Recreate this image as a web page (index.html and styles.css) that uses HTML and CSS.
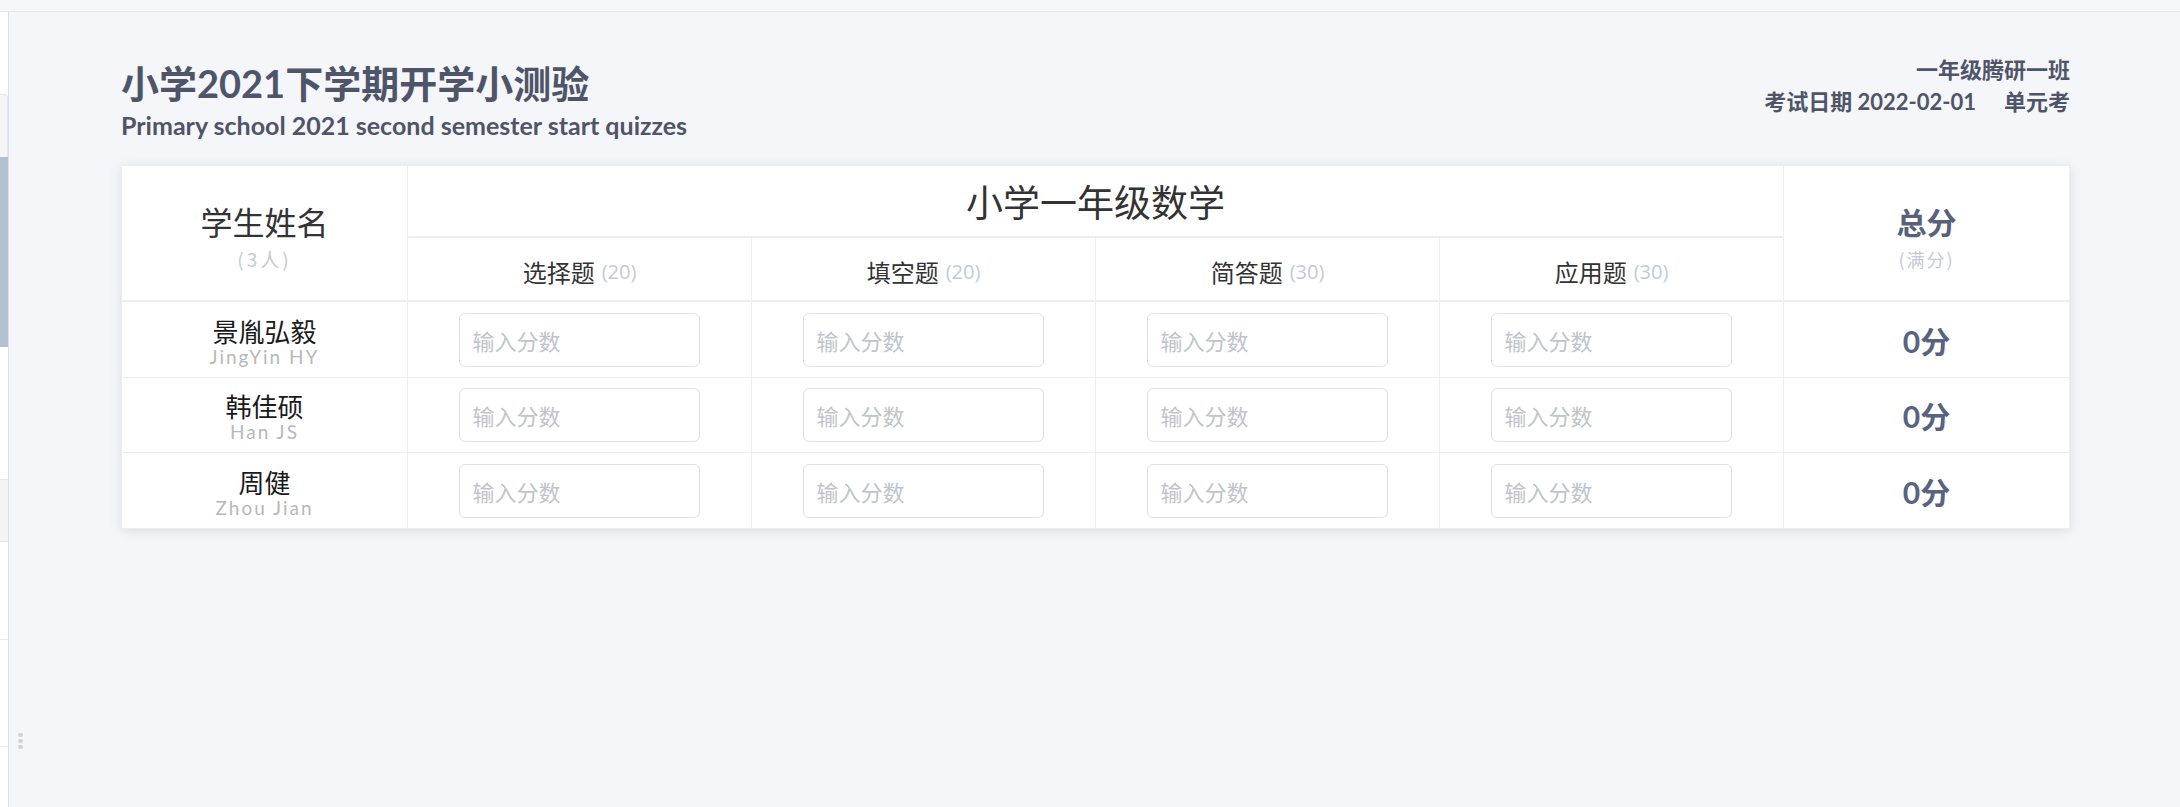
FILE: index.html
```html
<!DOCTYPE html>
<html lang="zh-CN">
<head>
<meta charset="utf-8">
<title>小学2021下学期开学小测验</title>
<link rel="stylesheet" href="styles.css">
</head>
<body>
<div class="topbar"></div>
<div class="layout">
  <aside class="rail">
    <div class="rail-tab"></div>
    <div class="rail-active"></div>
    <div class="rail-space"></div>
    <div class="rail-box"></div>
    <div class="rail-line rail-line-1"></div>
    <div class="rail-line rail-line-2"></div>
  </aside>
  <main class="main">
    <header class="head">
      <div class="head-left">
        <h1 class="title">小学2021下学期开学小测验</h1>
        <p class="subtitle">Primary school 2021 second semester start quizzes</p>
      </div>
      <div class="head-right">
        <div class="info-line">一年级腾研一班</div>
        <div class="info-line">考试日期 2022-02-01<span class="info-gap"></span>单元考</div>
      </div>
    </header>

    <section class="card">
      <div class="grid">
        <div class="cell name-head">
          <div class="big-label">学生姓名</div>
          <div class="muted-label">(3人)</div>
        </div>
        <div class="cell subject-head">小学一年级数学</div>
        <div class="cell total-head">
          <div class="total-label">总分</div>
          <div class="muted-label muted-small">(满分)</div>
        </div>

        <div class="cell q-head">选择题<span class="q-max">(20)</span></div>
        <div class="cell q-head">填空题<span class="q-max">(20)</span></div>
        <div class="cell q-head">简答题<span class="q-max">(30)</span></div>
        <div class="cell q-head">应用题<span class="q-max">(30)</span></div>

        <div class="cell name-cell">
          <div class="student">景胤弘毅</div>
          <div class="pinyin">JingYin HY</div>
        </div>
        <div class="cell input-cell"><input class="score-input" type="text" placeholder="输入分数"></div>
        <div class="cell input-cell"><input class="score-input" type="text" placeholder="输入分数"></div>
        <div class="cell input-cell"><input class="score-input" type="text" placeholder="输入分数"></div>
        <div class="cell input-cell"><input class="score-input" type="text" placeholder="输入分数"></div>
        <div class="cell total-cell">0分</div>

        <div class="cell name-cell">
          <div class="student">韩佳硕</div>
          <div class="pinyin">Han JS</div>
        </div>
        <div class="cell input-cell"><input class="score-input" type="text" placeholder="输入分数"></div>
        <div class="cell input-cell"><input class="score-input" type="text" placeholder="输入分数"></div>
        <div class="cell input-cell"><input class="score-input" type="text" placeholder="输入分数"></div>
        <div class="cell input-cell"><input class="score-input" type="text" placeholder="输入分数"></div>
        <div class="cell total-cell">0分</div>

        <div class="cell name-cell last-row">
          <div class="student">周健</div>
          <div class="pinyin">Zhou Jian</div>
        </div>
        <div class="cell input-cell last-row"><input class="score-input" type="text" placeholder="输入分数"></div>
        <div class="cell input-cell last-row"><input class="score-input" type="text" placeholder="输入分数"></div>
        <div class="cell input-cell last-row"><input class="score-input" type="text" placeholder="输入分数"></div>
        <div class="cell input-cell last-row"><input class="score-input" type="text" placeholder="输入分数"></div>
        <div class="cell total-cell last-row">0分</div>
      </div>
    </section>

    <div class="handle"><i></i><i></i><i></i></div>
  </main>
</div>
</body>
</html>
```

FILE: styles.css
```css
* { box-sizing: border-box; }

html, body {
  margin: 0;
  padding: 0;
  height: 100%;
}

body {
  font-family: "Noto Sans CJK SC", "Noto Sans", sans-serif;
  background: #f5f6fa;
  color: #333;
  overflow: hidden;
}

.topbar {
  height: 12px;
  background: #f6f7fa;
  border-bottom: 1px solid #e4e6eb;
}

.layout {
  display: flex;
  height: 795px;
}

/* collapsed side rail */
.rail {
  width: 9px;
  flex: none;
  background: #fff;
  border-right: 1px solid #dcdfe6;
  display: flex;
  flex-direction: column;
}
.rail-tab {
  margin-top: 82px;
  height: 63px;
  background: #f5f5f6;
  border-top: 1px solid #e4e7ed;
  border-right: 1px solid #e4e7ed;
  border-top-right-radius: 4px;
}
.rail-active {
  height: 190px;
  background: #b3c0d1;
}
.rail-space { height: 132px; }
.rail-box {
  height: 63px;
  background: #f4f4f5;
  border-top: 1px solid #e6e6e6;
  border-bottom: 1px solid #e6e6e6;
}
.rail-line {
  height: 1px;
  background: #ebebeb;
}
.rail-line-1 { margin-top: 97px; }
.rail-line-2 { margin-top: 106px; }

/* main area */
.main {
  position: relative;
  flex: 1;
  padding: 42px 110px 0 112px;
  background: #f5f6fa;
}

.head {
  display: flex;
  justify-content: space-between;
  align-items: flex-start;
}

.head-left { padding-top: 4px; }

.title {
  margin: 0;
  font-family: "Lato", "Noto Sans CJK SC", sans-serif;
  font-size: 38px;
  line-height: 50px;
  font-weight: 700;
  color: #4e5568;
}

.subtitle {
  margin: 2px 0 0;
  font-family: "Lato", "Noto Sans CJK SC", sans-serif;
  font-size: 25px;
  line-height: 30px;
  font-weight: 700;
  color: #4e5568;
}

.head-right {
  text-align: right;
  font-family: "Lato", "Noto Sans CJK SC", sans-serif;
  font-weight: 700;
  font-size: 22px;
  color: #4e5568;
}
.info-line {
  line-height: 32px;
}
.info-gap {
  display: inline-block;
  width: 28px;
}

/* card */
.card {
  margin-top: 25px;
  background: #fff;
  border: 1px solid #ebeef5;
  box-shadow: 0 2px 12px 0 rgba(0, 0, 0, 0.1);
}

.grid {
  display: grid;
  grid-template-columns: 286px repeat(4, 1fr) 285px;
  grid-template-rows: 72px 64px 76px 75px 75px;
}

.cell {
  border-right: 1px solid #ebeef5;
  border-bottom: 1px solid #ebeef5;
  display: flex;
  align-items: center;
  justify-content: center;
  text-align: center;
}

.name-head {
  grid-column: 1;
  grid-row: 1 / span 2;
  flex-direction: column;
  padding-top: 8px;
  border-bottom-width: 2px;
}
.subject-head {
  grid-column: 2 / span 4;
  grid-row: 1;
  font-size: 37px;
  color: #333;
  border-bottom-width: 2px;
}
.total-head {
  grid-column: 6;
  grid-row: 1 / span 2;
  flex-direction: column;
  padding-top: 8px;
  border-right: none;
  border-bottom-width: 2px;
}

.big-label {
  font-size: 32px;
  line-height: 40px;
  color: #333;
}
.muted-label {
  margin-top: 4px;
  font-size: 19px;
  line-height: 28px;
  letter-spacing: 3px;
  color: #bfcbd9;
}
.muted-small {
  font-size: 18px;
  letter-spacing: 2px;
}
.total-label {
  font-size: 30px;
  line-height: 40px;
  font-weight: 700;
  color: #58617b;
}

.q-head {
  padding-top: 5px;
  font-size: 24px;
  color: #333;
  border-bottom-width: 2px;
}
.q-max {
  margin-left: 7px;
  font-family: "Open Sans", "Noto Sans CJK SC", sans-serif;
  font-size: 20px;
  color: #bfcbd9;
}

.name-cell {
  flex-direction: column;
  padding-top: 4px;
}
.student {
  font-size: 26px;
  line-height: 30px;
  color: #1a1a1a;
}
.pinyin {
  font-family: "Lato", "Noto Sans", sans-serif;
  font-size: 19px;
  line-height: 22px;
  letter-spacing: 2px;
  color: #b8b8b8;
}

.score-input {
  width: 70%;
  height: 54px;
  padding: 0 12px;
  border: 1px solid #dcdfe6;
  border-radius: 6px;
  background: #fff;
  font-family: "Noto Sans CJK SC", sans-serif;
  font-size: 22px;
  color: #333;
  outline: none;
}
.score-input::placeholder {
  color: #c0c4cc;
}

.total-cell {
  border-right: none;
  font-family: "Lato", "Noto Sans CJK SC", sans-serif;
  font-size: 30px;
  font-weight: 700;
  color: #58637f;
}

.last-row { border-bottom: none; }

/* resize handle */
.handle {
  position: absolute;
  left: 9px;
  top: 721px;
  display: flex;
  flex-direction: column;
  gap: 2px;
}
.handle i {
  display: block;
  width: 5px;
  height: 4px;
  border-radius: 2px;
  background: #cfd2d8;
}
```
